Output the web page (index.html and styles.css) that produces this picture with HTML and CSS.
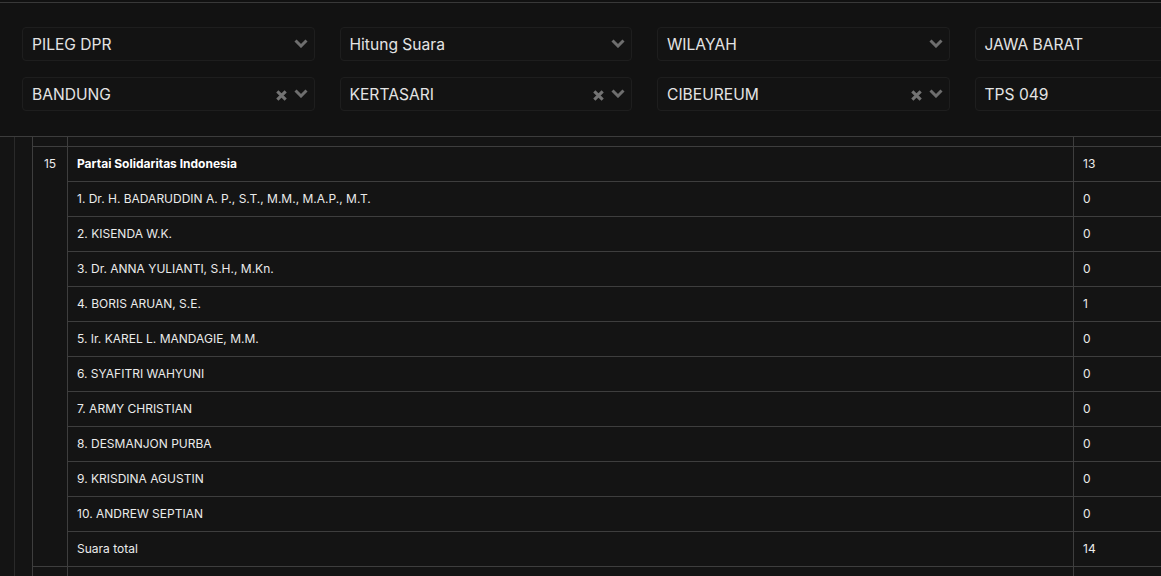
FILE: index.html
```html
<!DOCTYPE html>
<html lang="id">
<head>
<meta charset="utf-8">
<title>Hitung Suara</title>
<link rel="stylesheet" href="styles.css">
</head>
<body>
<div class="page">
  <header class="filters">
    <div class="filter-grid">
      <div class="select"><span class="value">PILEG DPR</span><span class="icons"><svg class="chev" viewBox="0 0 14 9"><polyline points="1.5,1.5 7,7 12.5,1.5"/></svg></span></div>
      <div class="select"><span class="value">Hitung Suara</span><span class="icons"><svg class="chev" viewBox="0 0 14 9"><polyline points="1.5,1.5 7,7 12.5,1.5"/></svg></span></div>
      <div class="select"><span class="value">WILAYAH</span><span class="icons"><svg class="chev" viewBox="0 0 14 9"><polyline points="1.5,1.5 7,7 12.5,1.5"/></svg></span></div>
      <div class="select"><span class="value">JAWA BARAT</span><span class="icons"><svg class="clear" viewBox="0 0 10 10"><path d="M1.2 1.2 L8.8 8.8 M8.8 1.2 L1.2 8.8"/></svg><svg class="chev" viewBox="0 0 14 9"><polyline points="1.5,1.5 7,7 12.5,1.5"/></svg></span></div>
      <div class="select"><span class="value">BANDUNG</span><span class="icons"><svg class="clear" viewBox="0 0 10 10"><path d="M1.2 1.2 L8.8 8.8 M8.8 1.2 L1.2 8.8"/></svg><svg class="chev" viewBox="0 0 14 9"><polyline points="1.5,1.5 7,7 12.5,1.5"/></svg></span></div>
      <div class="select"><span class="value">KERTASARI</span><span class="icons"><svg class="clear" viewBox="0 0 10 10"><path d="M1.2 1.2 L8.8 8.8 M8.8 1.2 L1.2 8.8"/></svg><svg class="chev" viewBox="0 0 14 9"><polyline points="1.5,1.5 7,7 12.5,1.5"/></svg></span></div>
      <div class="select"><span class="value">CIBEUREUM</span><span class="icons"><svg class="clear" viewBox="0 0 10 10"><path d="M1.2 1.2 L8.8 8.8 M8.8 1.2 L1.2 8.8"/></svg><svg class="chev" viewBox="0 0 14 9"><polyline points="1.5,1.5 7,7 12.5,1.5"/></svg></span></div>
      <div class="select"><span class="value">TPS 049</span><span class="icons"><svg class="clear" viewBox="0 0 10 10"><path d="M1.2 1.2 L8.8 8.8 M8.8 1.2 L1.2 8.8"/></svg><svg class="chev" viewBox="0 0 14 9"><polyline points="1.5,1.5 7,7 12.5,1.5"/></svg></span></div>
    </div>
  </header>

  <main class="content">
    <div class="outer">
      <div class="tbl">
        <div class="cell num stub"></div><div class="cell name stub"></div><div class="cell val stub"></div>

        <div class="cell num party-no">15</div>
        <div class="cell name party">Partai Solidaritas Indonesia</div><div class="cell val">13</div>
        <div class="cell name">1. Dr. H. BADARUDDIN A. P., S.T., M.M., M.A.P., M.T.</div><div class="cell val">0</div>
        <div class="cell name">2. KISENDA W.K.</div><div class="cell val">0</div>
        <div class="cell name">3. Dr. ANNA YULIANTI, S.H., M.Kn.</div><div class="cell val">0</div>
        <div class="cell name">4. BORIS ARUAN, S.E.</div><div class="cell val">1</div>
        <div class="cell name">5. Ir. KAREL L. MANDAGIE, M.M.</div><div class="cell val">0</div>
        <div class="cell name">6. SYAFITRI WAHYUNI</div><div class="cell val">0</div>
        <div class="cell name">7. ARMY CHRISTIAN</div><div class="cell val">0</div>
        <div class="cell name">8. DESMANJON PURBA</div><div class="cell val">0</div>
        <div class="cell name">9. KRISDINA AGUSTIN</div><div class="cell val">0</div>
        <div class="cell name">10. ANDREW SEPTIAN</div><div class="cell val">0</div>
        <div class="cell name">Suara total</div><div class="cell val">14</div>

        <div class="cell num"></div><div class="cell name"></div><div class="cell val"></div>
      </div>
    </div>
  </main>
</div>
</body>
</html>
```

FILE: styles.css
```css
html, body {
  margin: 0;
  padding: 0;
  background: #111111;
  overflow: hidden;
}

body {
  font-family: Inter, "Noto Sans", "Liberation Sans", sans-serif;
  color: #e6e6e6;
}

.page {
  width: 1161px;
  height: 576px;
  overflow: hidden;
  padding-top: 2px;
  box-sizing: border-box;
}

.filters {
  background: #121212;
  border-top: 1px solid #383838;
  border-bottom: 1px solid #3c3c3c;
  padding: 24px 0 25px 22px;
}

.filter-grid {
  display: grid;
  grid-template-columns: repeat(4, 292.5px);
  column-gap: 25px;
  row-gap: 16px;
  width: 1245px;
}

.select {
  height: 34px;
  box-sizing: border-box;
  border: 1px solid #1e1e1e;
  border-radius: 4px;
  background: #131313;
  display: flex;
  align-items: center;
  padding: 0 6px 0 9px;
  font-size: 15.6px;
  color: #e4e4e4;
}

.value {
  flex: 1;
  white-space: nowrap;
}

.icons {
  display: flex;
  align-items: center;
  gap: 7px;
}

.chev {
  width: 14px;
  height: 9px;
  fill: none;
  stroke: #6e6e6e;
  stroke-width: 3;
  stroke-linejoin: miter;
  margin-top: -1px;
}

.clear {
  width: 11px;
  height: 11px;
  fill: none;
  stroke: #737373;
  stroke-width: 2.8;
  margin-top: 3px;
}

.content {
  background: #141414;
  padding-left: 14px;
  height: 440px;
}

.outer {
  border-left: 1px solid #2a2a2a;
  padding-left: 17px;
  height: 100%;
}

.tbl {
  display: grid;
  grid-template-columns: 35px 1006px 200px;
  grid-template-rows: 10px repeat(12, 35px) 40px;
  border-left: 1px solid #3e3e3e;
  width: 1241px;
  font-size: 12px;
  color: #ebebeb;
}

.cell {
  border-right: 1px solid #3e3e3e;
  border-bottom: 1px solid #3e3e3e;
  display: flex;
  align-items: center;
  padding-left: 9px;
  padding-bottom: 2px;
  box-sizing: border-box;
  white-space: nowrap;
}

.cell.num {
  padding-left: 0;
  justify-content: center;
}

.stub {
  padding: 0;
}

.party-no {
  grid-row: span 12;
  align-items: flex-start;
  padding-top: 9px;
}

.party {
  font-weight: 700;
  color: #ffffff;
}

.val {
  border-right: none;
}
```
